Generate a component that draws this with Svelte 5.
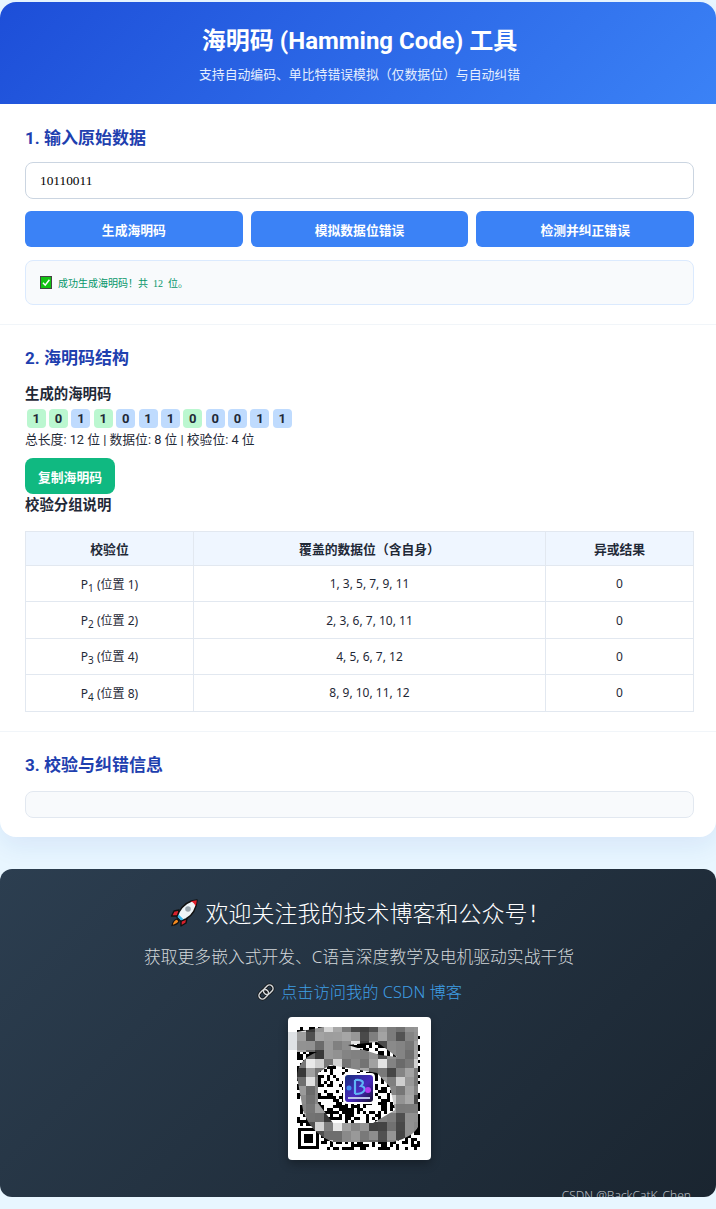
<script>
  const bits = [
    { v: 1, parity: true }, { v: 0, parity: true }, { v: 1 }, { v: 1, parity: true },
    { v: 0 }, { v: 1 }, { v: 1 }, { v: 0, parity: true },
    { v: 0 }, { v: 0 }, { v: 1 }, { v: 1 }
  ];

  const rows = [
    { n: 1, pos: 1, cover: '1, 3, 5, 7, 9, 11' },
    { n: 2, pos: 2, cover: '2, 3, 6, 7, 10, 11' },
    { n: 3, pos: 4, cover: '4, 5, 6, 7, 12' },
    { n: 4, pos: 8, cover: '8, 9, 10, 11, 12' }
  ];

  // small seeded random so the code looks the same on every load
  let seed = 73;
  function rnd() {
    seed = (seed * 16807) % 2147483647;
    return seed / 2147483647;
  }

  const modules = [];
  for (let y = 0; y < 41; y++) {
    for (let x = 0; x < 41; x++) {
      if (rnd() > 0.5) modules.push({ x: 9 + x * 3, y: 10 + y * 3 });
    }
  }

  // blurred squares, clipped to the ring further down
  const mosaic = [];
  for (let r = 0; r < 14; r++) {
    for (let c = 0; c < 15; c++) {
      const k = rnd();
      let g = 105 + Math.floor(rnd() * 65);
      if (k < 0.14) g = 55 + Math.floor(rnd() * 30);
      if (k > 0.93) g = 205 + Math.floor(rnd() * 30);
      mosaic.push({ x: c * 9, y: 6 + r * 9, fill: `rgb(${g},${g},${g})` });
    }
  }

  const ring = 'M35 10H130V110Q125 120 105 125H45Q22 116 15 93L9 60Q9 43 29 35H9V15Z'
    + 'M30 56L42 48L89 56L102 70L107 93L85 106H45L30 86Z'
    + 'M60 28L89 25L109 40L92 38Z';
</script>

<div class="tool">
  <header class="head">
    <h1>海明码 (Hamming Code) 工具</h1>
    <p>支持自动编码、单比特错误模拟（仅数据位）与自动纠错</p>
  </header>

  <section class="sec first">
    <h2>1. 输入原始数据</h2>
    <input class="raw" type="text" value="10110011" />
    <div class="btns">
      <button>生成海明码</button>
      <button>模拟数据位错误</button>
      <button>检测并纠正错误</button>
    </div>
    <div class="msg">
      <svg width="12" height="13" viewBox="0 0 12 13">
        <rect x="0.5" y="0.5" width="11" height="12" fill="#12c212" stroke="#444" />
        <path d="M3 6.8l2.2 2.4L9.4 3.8" fill="none" stroke="#fff" stroke-width="1.5" />
      </svg>
      <span>成功生成海明码！共 12 位。</span>
    </div>
  </section>

  <section class="sec second">
    <h2>2. 海明码结构</h2>
    <h3>生成的海明码</h3>
    <div class="bits">
      {#each bits as b}
        <span class="bit" class:parity={b.parity}>{b.v}</span>
      {/each}
    </div>
    <p class="info">总长度: 12 位 | 数据位: 8 位 | 校验位: 4 位</p>
    <button class="copy">复制海明码</button>
    <h3 class="groups">校验分组说明</h3>
    <table>
      <thead>
        <tr><th class="c1">校验位</th><th class="c2">覆盖的数据位（含自身）</th><th>异或结果</th></tr>
      </thead>
      <tbody>
        {#each rows as r}
          <tr>
            <td>P<sub>{r.n}</sub> (位置 {r.pos})</td>
            <td>{r.cover}</td>
            <td>0</td>
          </tr>
        {/each}
      </tbody>
    </table>
  </section>

  <section class="sec third">
    <h2>3. 校验与纠错信息</h2>
    <div class="empty"></div>
  </section>
</div>

<footer class="promo">
  <h2>
    <svg class="rocket" width="28" height="28" viewBox="0 0 28 28">
      <path d="M9 11L4 12 1.5 17H8z" fill="#d8202c" stroke="#111" stroke-width="1.4" stroke-linejoin="round" />
      <path d="M17 19l-1 5-5 3v-6z" fill="#d8202c" stroke="#111" stroke-width="1.4" stroke-linejoin="round" />
      <path d="M7 20C4 21 2.500 24 2 26.500 5 26 8 25 9 22z" fill="#f58a1f" stroke="#111" stroke-width="1.2" />
      <path d="M27 1C20 1.500 13 6 9 13L7 18l4 4 5-2C23 16 26.500 8 27 1z" fill="#eef5f8" stroke="#111" stroke-width="1.5" stroke-linejoin="round" />
      <path d="M20.500 2.600C23 3 25 5 25.500 7.500 26.300 5.500 26.600 3.300 26.800 1.200 24.500 1.400 22.500 1.900 20.500 2.600z" fill="#e2202c" />
      <path d="M8.600 15.500L13.500 20.300 11 21.500 7.500 18z" fill="#35b4ea" />
      <circle cx="18" cy="10" r="2.800" fill="#9aa5ad" />
    </svg>
    <span>欢迎关注我的技术博客和公众号！</span>
  </h2>
  <p class="lead">获取更多嵌入式开发、C语言深度教学及电机驱动实战干货</p>
  <p class="link">
    <svg width="18" height="18" viewBox="0 0 18 18" fill="none">
      <g transform="rotate(-45 9 9)">
        <rect x="0.5" y="5.5" width="10.5" height="7" rx="3.5" stroke="#111" stroke-width="3" />
        <rect x="7" y="5.5" width="10.5" height="7" rx="3.5" stroke="#111" stroke-width="3" />
        <rect x="0.5" y="5.5" width="10.5" height="7" rx="3.5" stroke="#d5d9dc" stroke-width="1.5" />
        <rect x="7" y="5.5" width="10.5" height="7" rx="3.5" stroke="#d5d9dc" stroke-width="1.5" />
      </g>
    </svg>
    <a href="#top">点击访问我的 CSDN 博客</a>
  </p>
  <svg class="qr" width="143" height="143" viewBox="0 0 143 143">
    <defs>
      <linearGradient id="logo" x1="0" y1="0" x2="1" y2="1">
        <stop offset="0" stop-color="#16307e" />
        <stop offset="0.55" stop-color="#4a2ac0" />
        <stop offset="1" stop-color="#14102e" />
      </linearGradient>
      <clipPath id="ring">
        <path d={ring} clip-rule="evenodd" />
      </clipPath>
    </defs>
    {#each modules as m}
      <rect x={m.x} y={m.y} width="3" height="3" fill="#000" />
    {/each}
    <rect x="9" y="109" width="24" height="24" fill="#fff" />
    <rect x="10" y="111" width="21" height="21" fill="#000" />
    <rect x="13" y="114" width="15" height="15" fill="#fff" />
    <rect x="16" y="117" width="9" height="9" fill="#000" />
    <g clip-path="url(#ring)">
      {#each mosaic as t}
        <rect x={t.x} y={t.y} width="9" height="9" fill={t.fill} />
      {/each}
    </g>
    <rect x="0" y="15" width="9" height="18" fill="#dfe2e5" />
    <rect x="55" y="56" width="32" height="31" rx="4" fill="#fff" />
    <rect x="57" y="58" width="28" height="27" rx="3" fill="url(#logo)" />
    <path d="M67 63v14M67 63c7-1 10 2 6 6 6 1 5 8-6 8" fill="none" stroke="#5fb4f5" stroke-width="2.2" />
    <circle cx="61" cy="71" r="2.5" fill="#3f8df0" />
    <circle cx="80" cy="73" r="3" fill="#b13cf0" />
    <rect x="60" y="80" width="22" height="2" fill="#b9c2e8" />
  </svg>
  <span class="mark">CSDN @BackCatK_Chen</span>
</footer>

<style>
  :global(body) {
    background: #e8f6ff;
    font-family: Roboto, "Noto Sans CJK SC", sans-serif;
    color: #1f2937;
  }

  .tool {
    margin-top: 2px;
    background: #fff;
    border-radius: 16px;
    overflow: hidden;
    box-shadow: 0 10px 25px rgba(30, 64, 175, 0.08);
  }

  .head {
    height: 102px;
    box-sizing: border-box;
    padding: 24px 0 0 3px;
    text-align: center;
    color: #fff;
    background: linear-gradient(135deg, #1d4ed8, #3b82f6);
  }

  .head h1 {
    margin: 0;
    font-size: 24px;
    line-height: 30px;
    font-weight: 700;
  }

  .head p {
    margin: 9px 0 0;
    font-size: 12.85px;
    line-height: 20px;
    color: #e4eefe;
  }

  .sec {
    padding: 0 22px 0 25px;
    border-bottom: 1px solid #f1f5f9;
  }

  .sec h2 {
    margin: 0;
    font-size: 17px;
    line-height: 22px;
    font-weight: 700;
    color: #1e40af;
  }

  .first { padding-top: 23px; height: 197px; }
  .second { padding-top: 22px; height: 384px; }
  .third { padding-top: 22px; height: 83px; border-bottom: 0; }

  .raw {
    display: block;
    box-sizing: border-box;
    width: 100%;
    height: 37px;
    margin-top: 13px;
    padding: 0 14px;
    border: 1px solid #cbd5e1;
    border-radius: 8px;
    font-family: "Liberation Serif", serif;
    font-size: 13.33px;
    color: #000;
    background: #fff;
  }

  .btns {
    display: grid;
    grid-template-columns: repeat(3, 1fr);
    gap: 8px;
    margin-top: 12px;
  }

  button {
    height: 36px;
    padding: 0;
    border: 0;
    border-radius: 6px;
    background: #3b82f6;
    color: #fff;
    font-family: inherit;
    font-size: 12.8px;
    font-weight: 700;
  }

  .msg {
    display: flex;
    align-items: center;
    gap: 6px;
    box-sizing: border-box;
    height: 45px;
    margin-top: 13px;
    padding: 0 14px;
    background: #f8fafc;
    border: 1px solid #dbeafe;
    border-radius: 8px;
    font-family: "Liberation Serif", "Noto Sans CJK SC", serif;
    font-size: 10px;
    word-spacing: 2.5px;
    color: #059669;
  }

  h3 {
    margin: 16px 0 0;
    font-size: 14.4px;
    line-height: 20px;
    font-weight: 700;
    color: #1f2937;
  }

  .bits {
    display: flex;
    margin: 4px 0 0 0;
  }

  .bit {
    width: 19px;
    height: 19px;
    margin: 0 1.7px;
    border-radius: 4px;
    background: #bfdbfe;
    font-size: 13px;
    font-weight: 700;
    line-height: 19px;
    text-align: center;
    color: #1f2937;
  }

  .bit.parity { background: #bbf7d0; }

  .info {
    margin: 2px 0 0;
    font-size: 12.8px;
    line-height: 20px;
    color: #1f2937;
  }

  .copy {
    display: block;
    width: 90px;
    margin-top: 8px;
    border-radius: 8px;
    background: #10b981;
  }

  h3.groups { margin-top: 2px; }

  table {
    width: 100%;
    margin-top: 15px;
    border-collapse: collapse;
    font-family: "Noto Sans", "Noto Sans CJK SC", sans-serif;
    font-size: 12px;
    text-align: center;
  }

  th, td {
    border: 1px solid #e2e8f0;
    padding: 0;
  }

  th {
    height: 33px;
    background: #eff6ff;
    font-size: 12.8px;
    font-weight: 700;
    color: #1f2937;
  }

  td { height: 35.4px; color: #1f2937; }
  sub { font-size: 10px; line-height: 0; }
  .c1 { width: 167px; }
  .c2 { width: 351px; }

  .empty {
    height: 27px;
    margin-top: 15px;
    box-sizing: border-box;
    background: #f8fafc;
    border: 1px solid #e2e8f0;
    border-radius: 8px;
  }

  .promo {
    position: relative;
    height: 328px;
    margin-top: 32px;
    padding-top: 29px;
    box-sizing: border-box;
    border-radius: 12px;
    background: linear-gradient(135deg, #2c3e50, #1a2530);
    font-family: "Noto Sans", "Noto Sans CJK SC", sans-serif;
    text-align: center;
  }

  .promo h2 {
    display: flex;
    justify-content: center;
    align-items: center;
    gap: 8px;
    margin: 0;
    padding-left: 4px;
    font-size: 23px;
    line-height: 30px;
    font-weight: 300;
    color: #fff;
  }

  .lead {
    margin: 17px 0 0;
    padding-left: 2px;
    font-size: 16.8px;
    line-height: 24px;
    font-weight: 300;
    color: #d2d7da;
  }

  .link {
    display: flex;
    justify-content: center;
    align-items: center;
    gap: 6px;
    margin: 11px 0 0;
    padding-left: 3px;
    font-size: 16.3px;
    line-height: 24px;
    font-weight: 300;
  }

  .link a {
    color: #3f9fe6;
    text-decoration: none;
  }

  .qr {
    display: block;
    margin: 13px 0 0 288px;
    background: #fff;
    border-radius: 4px;
    box-shadow: 0 4px 10px rgba(0, 0, 0, 0.3);
  }

  .mark {
    position: absolute;
    right: 25px;
    bottom: -7px;
    font-size: 12px;
    line-height: 16px;
    font-weight: 300;
    color: rgba(225, 230, 235, 0.8);
  }
</style>
